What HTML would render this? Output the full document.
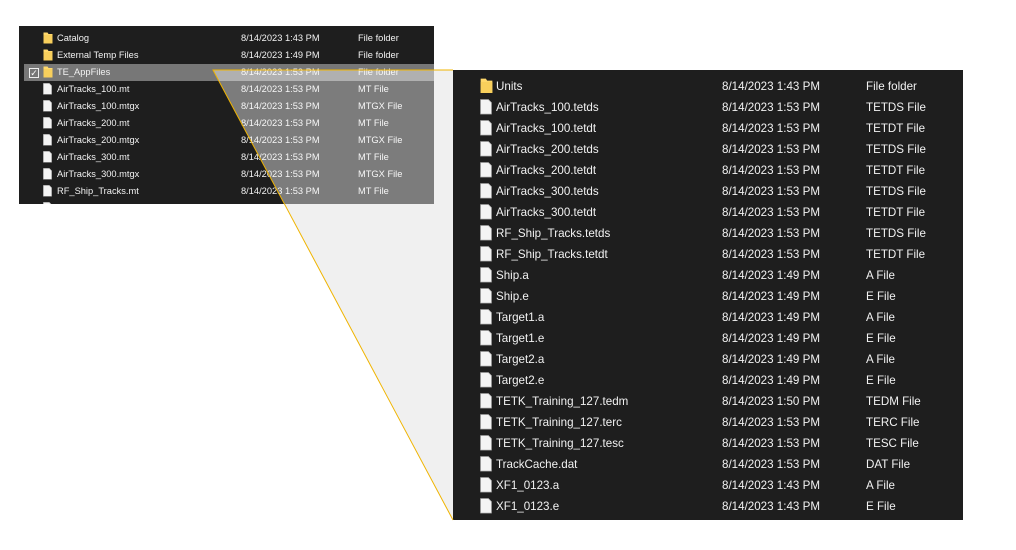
<!DOCTYPE html>
<html><head><meta charset="utf-8"><style>
html,body{margin:0;padding:0;background:#fff;width:1016px;height:550px;overflow:hidden;position:relative;font-family:"Liberation Sans",sans-serif;}
.p{position:absolute;background:#1e1e1e;overflow:hidden}
.r{position:absolute;left:0;right:0;color:#f2f2f2;white-space:nowrap}
.r span{position:absolute}
.l .r{font-size:9.3px;height:17px;line-height:17px}
.rt .r{font-size:11.6px;height:21px;line-height:21px}
svg.i{position:absolute}
</style></head><body>
<svg width="1016" height="550" style="position:absolute;left:0;top:0">
<polygon points="213,70 453,70 453,520" fill="#f0f0f0"/>
</svg>
<div class="p l" style="left:19px;top:26px;width:415px;height:178px" id="L"></div>
<div class="p rt" style="left:453px;top:70px;width:510px;height:450px" id="R"></div>
<svg width="1016" height="550" style="position:absolute;left:0;top:0">
<defs><clipPath id="c"><rect x="19" y="26" width="415" height="178"/></clipPath></defs>
<polygon points="213,70 453,70 453,520" fill="rgba(255,255,255,0.42)" clip-path="url(#c)"/>
<polyline points="453,70 213,70 453,520" fill="none" stroke="#f0b400" stroke-width="1"/>
</svg>
<script>
const fold=(s)=>`<svg class="i" width="${s}" height="${s*1.2}" viewBox="0 0 10 12"><path d="M0.5 0.5h4l1 1.5h4v9.5h-9z" fill="#ffd86b"/><rect x="0.5" y="3" width="9" height="8.5" fill="#f8cf5c"/></svg>`;
const file=(s)=>`<svg class="i" width="${s}" height="${s*1.3}" viewBox="0 0 10 13"><path d="M0.5 0.5h6.5l2.5 2.5v9.5h-9z" fill="#f4f4f4" stroke="#bbb" stroke-width="0.6"/></svg>`;
const L=[["f","Catalog","8/14/2023 1:43 PM","File folder"],["f","External Temp Files","8/14/2023 1:49 PM","File folder"],["s","TE_AppFiles","8/14/2023 1:53 PM","File folder"],["d","AirTracks_100.mt","8/14/2023 1:53 PM","MT File"],["d","AirTracks_100.mtgx","8/14/2023 1:53 PM","MTGX File"],["d","AirTracks_200.mt","8/14/2023 1:53 PM","MT File"],["d","AirTracks_200.mtgx","8/14/2023 1:53 PM","MTGX File"],["d","AirTracks_300.mt","8/14/2023 1:53 PM","MT File"],["d","AirTracks_300.mtgx","8/14/2023 1:53 PM","MTGX File"],["d","RF_Ship_Tracks.mt","8/14/2023 1:53 PM","MT File"],["d","","",""]];
let h="";
L.forEach((r,i)=>{const y=4+i*17;
 if(r[0]=="s")h+=`<div style="position:absolute;left:5px;top:${y}px;width:410px;height:17px;background:#777"></div><div style="position:absolute;left:10px;top:${y+4}px;width:8px;height:8px;border:1px solid #eee;color:#fff;font-size:9px;line-height:8px;text-align:center">✓</div>`;
 const ic=(r[0]=="d")?file(9):fold(10);
 h+=`<div class="r" style="top:${y}px"><div style="position:absolute;left:24px;top:2px">${ic}</div><span style="left:38px">${r[1]}</span><span style="left:222px">${r[2]}</span><span style="left:339px">${r[3]}</span></div>`;});
document.getElementById('L').innerHTML=h;
const R=[["f","Units","8/14/2023 1:43 PM","File folder"],["d","AirTracks_100.tetds","8/14/2023 1:53 PM","TETDS File"],["d","AirTracks_100.tetdt","8/14/2023 1:53 PM","TETDT File"],["d","AirTracks_200.tetds","8/14/2023 1:53 PM","TETDS File"],["d","AirTracks_200.tetdt","8/14/2023 1:53 PM","TETDT File"],["d","AirTracks_300.tetds","8/14/2023 1:53 PM","TETDS File"],["d","AirTracks_300.tetdt","8/14/2023 1:53 PM","TETDT File"],["d","RF_Ship_Tracks.tetds","8/14/2023 1:53 PM","TETDS File"],["d","RF_Ship_Tracks.tetdt","8/14/2023 1:53 PM","TETDT File"],["d","Ship.a","8/14/2023 1:49 PM","A File"],["d","Ship.e","8/14/2023 1:49 PM","E File"],["d","Target1.a","8/14/2023 1:49 PM","A File"],["d","Target1.e","8/14/2023 1:49 PM","E File"],["d","Target2.a","8/14/2023 1:49 PM","A File"],["d","Target2.e","8/14/2023 1:49 PM","E File"],["d","TETK_Training_127.tedm","8/14/2023 1:50 PM","TEDM File"],["d","TETK_Training_127.terc","8/14/2023 1:53 PM","TERC File"],["d","TETK_Training_127.tesc","8/14/2023 1:53 PM","TESC File"],["d","TrackCache.dat","8/14/2023 1:53 PM","DAT File"],["d","XF1_0123.a","8/14/2023 1:43 PM","A File"],["d","XF1_0123.e","8/14/2023 1:43 PM","E File"]];
h="";
R.forEach((r,i)=>{const y=6+i*21;const ic=(r[0]=="d")?file(12):fold(13);
 h+=`<div class="r" style="top:${y}px"><div style="position:absolute;left:27px;top:2px">${ic}</div><span style="left:43px">${r[1]}</span><span style="left:269px">${r[2]}</span><span style="left:413px">${r[3]}</span></div>`;});
document.getElementById('R').innerHTML=h;
</script>
</body></html>
